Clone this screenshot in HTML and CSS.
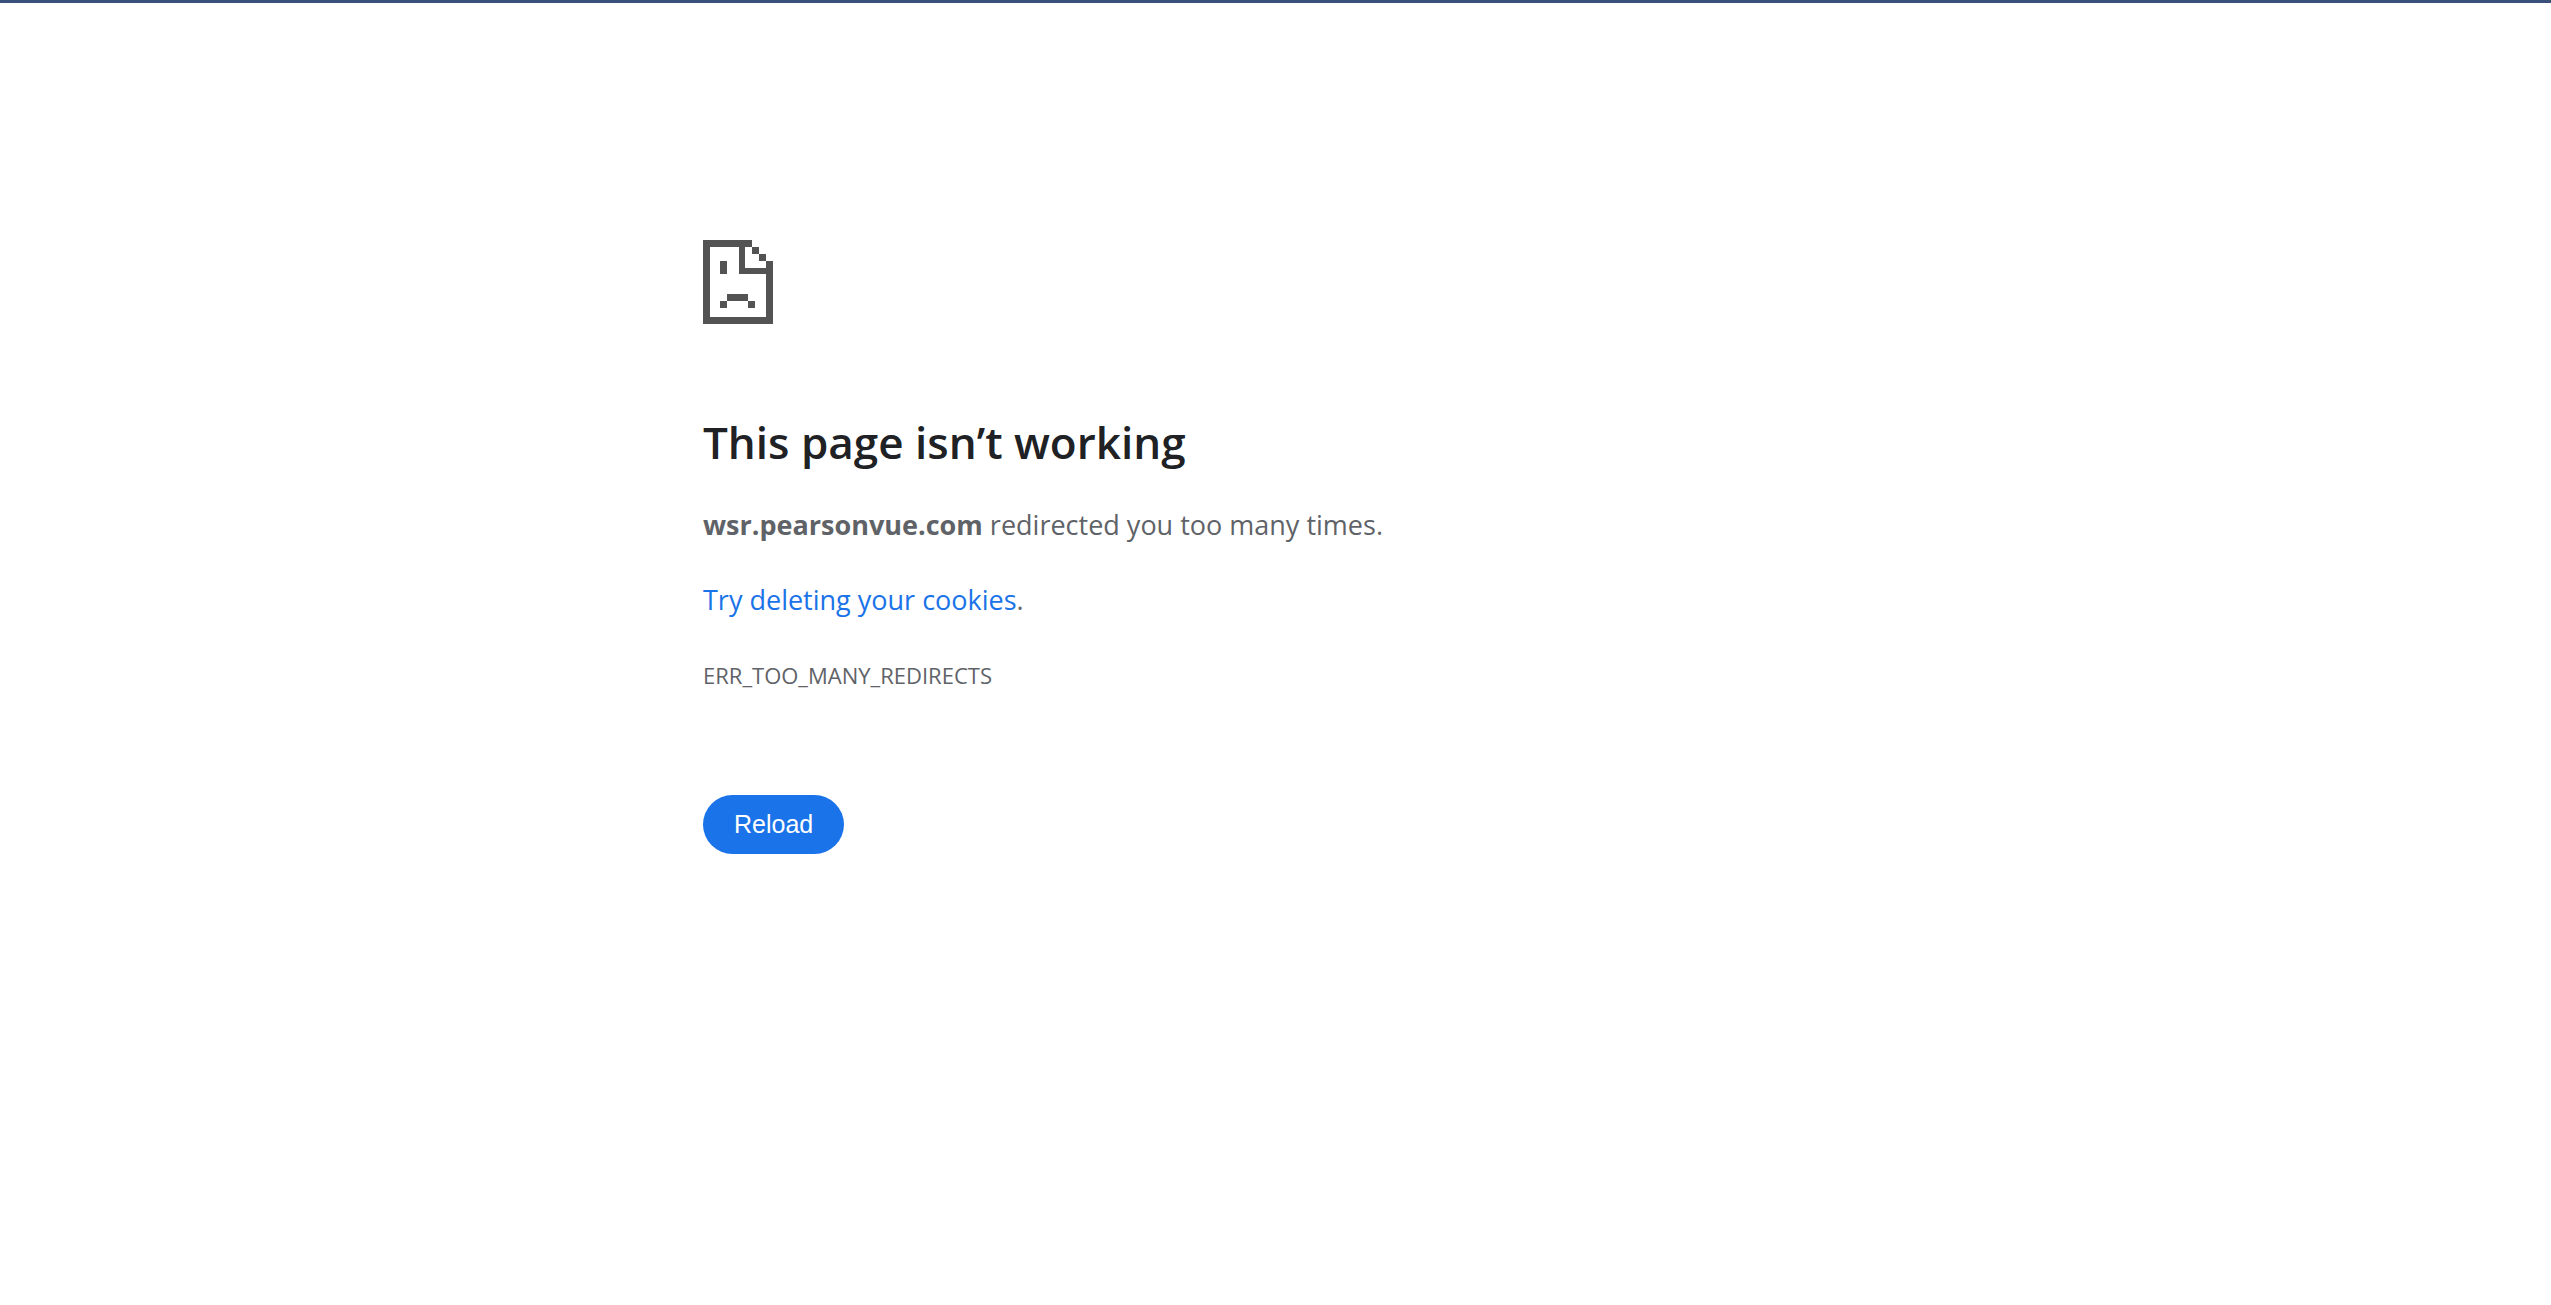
FILE: index.html
```
<!DOCTYPE html>
<html lang="en">
<head>
  <meta charset="UTF-8" />
  <meta name="viewport" content="width=device-width, initial-scale=1" />
  <title>wsr.pearsonvue.com</title>
  <link rel="stylesheet" href="styles.css">
</head>
<body>
  <main class="error-page">
    <svg class="sad-page" viewBox="0 0 70 84" shape-rendering="crispEdges" aria-hidden="true">
      <!-- sheet outline with the stepped corner -->
      <path d="M0 0H49V7H42V28H63V21H70V84H0ZM7 7V77H63V34H36V7Z" fill-rule="evenodd" />
      <path d="M49 7h7v7h-7zM56 14h7v7h-7z" />
      <!-- face -->
      <path d="M17 21h7v13h-7zM24 54h21v7h-21zM17 61h7v7h-7zM45 61h7v7h-7z" />
    </svg>
    <h1>This page isn’t working</h1>
    <p><strong>wsr.pearsonvue.com</strong> redirected you too many times.</p>
    <p><a href="#">Try deleting your cookies</a>.</p>
    <p class="error-code">ERR_TOO_MANY_REDIRECTS</p>
    <button class="reload" type="button" onclick="location.reload()">Reload</button>
  </main>
</body>
</html>
```
FILE: styles.css
```
body {
  margin: 0;
  border-top: 3px solid #39507a;
  background-color: #fff;
  color: #5f6368;
  font-family: 'Segoe UI', 'Open Sans', 'Noto Sans', sans-serif;
  font-size: 27px;
  line-height: 44px;
}
.error-page {
  max-width: 1145px;
  margin: 0 auto;
  padding-top: 237px;
}
.sad-page {
  display: block;
  width: 70px;
  height: 84px;
  fill: #535353;
}
h1 {
  margin: 86px 0 29px;
  color: #202124;
  font-size: 44px;
  font-weight: 600;
  line-height: 64px;
}
p {
  margin: 0 0 31px;
}
a {
  color: #1a73e8;
  text-decoration: none;
}
.error-code {
  font-size: 22px;
}
.reload {
  display: block;
  margin-top: 98px;
  padding: 0 31px;
  border: none;
  border-radius: 30px;
  background-color: #1a73e8;
  color: #fff;
  font-family: 'Liberation Sans', Arial, sans-serif;
  font-size: 25px;
  line-height: 59px;
  cursor: pointer;
}
.reload:hover, .reload:focus {
  background-color: #1b66c9;
}
```
